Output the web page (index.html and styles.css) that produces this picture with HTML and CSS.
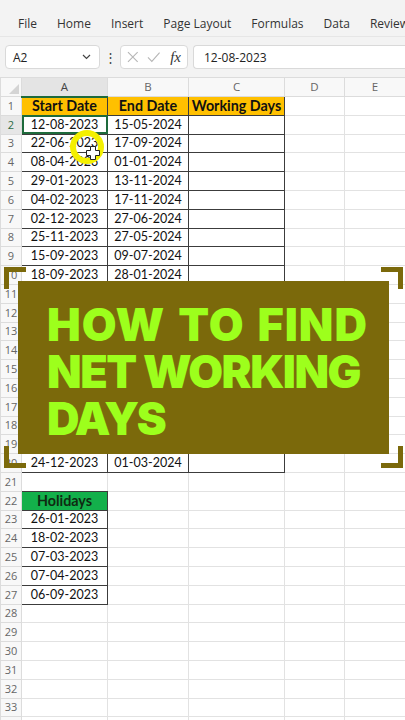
FILE: index.html
```html
<!DOCTYPE html>
<html>
<head>
<meta charset="utf-8">
<link rel="stylesheet" href="styles.css">
</head>
<body>
<div class="page">
  <div class="menubar">
    <span>File</span><span>Home</span><span>Insert</span><span>Page Layout</span><span>Formulas</span><span>Data</span><span>Review</span>
  </div>
  <div class="formulabar">
    <div class="namebox"><span>A2</span>
      <svg class="chev" width="9" height="6" viewBox="0 0 9 6"><path d="M1 1 L4.5 4.5 L8 1" fill="none" stroke="#444" stroke-width="1.2"/></svg>
    </div>
    <div class="dots">⋮</div>
    <div class="fnbox">
      <svg width="12" height="12" viewBox="0 0 12 12"><path d="M1 1 L11 11 M11 1 L1 11" stroke="#b5b5b5" stroke-width="1.1"/></svg>
      <svg width="14" height="12" viewBox="0 0 14 12"><path d="M1 6.5 L5 10.5 L13 1.5" fill="none" stroke="#b5b5b5" stroke-width="1.1"/></svg>
      <span class="fx">fx</span>
    </div>
    <div class="valuebox">12-08-2023</div>
  </div>
  <table class="sheet">
    <colgroup><col class="c0"><col class="ca"><col class="cb"><col class="cc"><col class="cd"><col class="ce"></colgroup>
    <tr class="hdr"><th class="corner"><span class="tri"></span></th><th class="sel">A</th><th>B</th><th>C</th><th>D</th><th>E</th></tr>
    <tr><th>1</th><td class="b y">Start Date</td><td class="b y">End Date</td><td class="b y">Working Days</td><td></td><td></td></tr>
    <tr><th class="rsel">2</th><td class="b cur">12-08-2023</td><td class="b">15-05-2024</td><td class="b"></td><td></td><td></td></tr>
    <tr><th>3</th><td class="b">22-06-2023</td><td class="b">17-09-2024</td><td class="b"></td><td></td><td></td></tr>
    <tr><th>4</th><td class="b">08-04-2023</td><td class="b">01-01-2024</td><td class="b"></td><td></td><td></td></tr>
    <tr><th>5</th><td class="b">29-01-2023</td><td class="b">13-11-2024</td><td class="b"></td><td></td><td></td></tr>
    <tr><th>6</th><td class="b">04-02-2023</td><td class="b">17-11-2024</td><td class="b"></td><td></td><td></td></tr>
    <tr><th>7</th><td class="b">02-12-2023</td><td class="b">27-06-2024</td><td class="b"></td><td></td><td></td></tr>
    <tr><th>8</th><td class="b">25-11-2023</td><td class="b">27-05-2024</td><td class="b"></td><td></td><td></td></tr>
    <tr><th>9</th><td class="b">15-09-2023</td><td class="b">09-07-2024</td><td class="b"></td><td></td><td></td></tr>
    <tr><th>10</th><td class="b">18-09-2023</td><td class="b">28-01-2024</td><td class="b"></td><td></td><td></td></tr>
    <tr><th>11</th><td class="b">05-03-2023</td><td class="b">14-02-2024</td><td class="b"></td><td></td><td></td></tr>
    <tr><th>12</th><td class="b">11-07-2023</td><td class="b">22-08-2024</td><td class="b"></td><td></td><td></td></tr>
    <tr><th>13</th><td class="b">19-10-2023</td><td class="b">03-04-2024</td><td class="b"></td><td></td><td></td></tr>
    <tr><th>14</th><td class="b">27-02-2023</td><td class="b">16-10-2024</td><td class="b"></td><td></td><td></td></tr>
    <tr><th>15</th><td class="b">09-05-2023</td><td class="b">21-12-2024</td><td class="b"></td><td></td><td></td></tr>
    <tr><th>16</th><td class="b">14-06-2023</td><td class="b">30-03-2024</td><td class="b"></td><td></td><td></td></tr>
    <tr><th>17</th><td class="b">03-08-2023</td><td class="b">12-06-2024</td><td class="b"></td><td></td><td></td></tr>
    <tr><th>18</th><td class="b">21-01-2023</td><td class="b">08-09-2024</td><td class="b"></td><td></td><td></td></tr>
    <tr><th>19</th><td class="b">30-10-2023</td><td class="b">25-07-2024</td><td class="b"></td><td></td><td></td></tr>
    <tr><th>20</th><td class="b">24-12-2023</td><td class="b">01-03-2024</td><td class="b"></td><td></td><td></td></tr>
    <tr><th>21</th><td class="bb"></td><td></td><td></td><td></td><td></td></tr>
    <tr><th>22</th><td class="b g">Holidays</td><td></td><td></td><td></td><td></td></tr>
    <tr><th>23</th><td class="b">26-01-2023</td><td></td><td></td><td></td><td></td></tr>
    <tr><th>24</th><td class="b">18-02-2023</td><td></td><td></td><td></td><td></td></tr>
    <tr><th>25</th><td class="b">07-03-2023</td><td></td><td></td><td></td><td></td></tr>
    <tr><th>26</th><td class="b">07-04-2023</td><td></td><td></td><td></td><td></td></tr>
    <tr><th>27</th><td class="b">06-09-2023</td><td></td><td></td><td></td><td></td></tr>
    <tr><th>28</th><td></td><td></td><td></td><td></td><td></td></tr>
    <tr><th>29</th><td></td><td></td><td></td><td></td><td></td></tr>
    <tr><th>30</th><td></td><td></td><td></td><td></td><td></td></tr>
    <tr><th>31</th><td></td><td></td><td></td><td></td><td></td></tr>
    <tr><th>32</th><td></td><td></td><td></td><td></td><td></td></tr>
    <tr><th>33</th><td></td><td></td><td></td><td></td><td></td></tr>
    <tr><th>34</th><td></td><td></td><td></td><td></td><td></td></tr>
  </table>

  <div class="ring">
    <svg class="plus" width="14" height="14" viewBox="0 0 14 14"><path d="M4.5 0.5 H9.5 V4.5 H13.5 V9.5 H9.5 V13.5 H4.5 V9.5 H0.5 V4.5 H4.5 Z" fill="#fff" stroke="#222" stroke-width="1"/></svg>
  </div>

  <div class="bracket tl"></div>
  <div class="bracket tr"></div>
  <div class="bracket bl"></div>
  <div class="bracket br"></div>
  <div class="banner">
    <div class="headline">
      <span class="l1">HOW TO FIND</span>
      <span class="l2">NET WORKING</span>
      <span class="l3">DAYS</span>
    </div>
  </div>
</div>
</body>
</html>
```

FILE: styles.css
```css
html, body {
  margin: 0;
  padding: 0;
  background: #fff;
}
.page {
  position: relative;
  width: 405px;
  height: 720px;
  overflow: hidden;
  font-family: "Open Sans", "Noto Sans", sans-serif;
}
.menubar {
  height: 37px;
  background: #f3f3f3;
  border-bottom: 1px solid #e6e6e6;
  display: flex;
  align-items: center;
  gap: 20px;
  padding: 11px 0 0 18px;
  box-sizing: border-box;
  font-size: 12px;
  color: #333;
  white-space: nowrap;
}
.formulabar {
  height: 40px;
  background: #f3f3f3;
  display: flex;
  align-items: center;
  padding: 0 0 0 5px;
  box-sizing: border-box;
}
.namebox, .fnbox, .valuebox {
  height: 24px;
  background: #fff;
  border: 1px solid #d9d9d9;
  border-radius: 4px;
  box-sizing: border-box;
  display: flex;
  align-items: center;
  font-size: 12px;
  color: #222;
}
.namebox {
  width: 95px;
  padding: 0 8px 0 7px;
  justify-content: space-between;
}
.dots {
  width: 20px;
  text-align: center;
  font-size: 13px;
  color: #444;
}
.fnbox {
  width: 68px;
  padding: 0 6px 0 6px;
  gap: 8px;
}
.fx {
  font-family: "Liberation Serif", serif;
  font-style: italic;
  font-size: 15px;
  color: #333;
  margin-left: 2px;
}
.valuebox {
  flex: 1;
  margin-left: 5px;
  padding-left: 10px;
  border-right: none;
  border-radius: 4px 0 0 4px;
}
.sheet {
  table-layout: fixed;
  width: 405px;
  border-collapse: collapse;
  font-family: "Lato", "Liberation Sans", sans-serif;
  font-size: 12.5px;
  color: #111;
}
.c0 { width: 21px; }
.ca { width: 86px; }
.cb { width: 81px; }
.cc { width: 96px; }
.cd { width: 60px; }
.ce { width: 61px; }
.sheet tr { height: 18.8px; }
.sheet tr.hdr { height: 19px; }
.sheet th, .sheet td {
  padding: 0;
  border: 1px solid #e2e2e2;
  text-align: center;
  white-space: nowrap;
  overflow: hidden;
  line-height: 16px;
}
.sheet th {
  font-family: "Open Sans", "Noto Sans", sans-serif;
  font-weight: normal;
  font-size: 11px;
  color: #666;
  background: #f8f8f8;
  border-color: #dcdcdc;
}
.sheet .hdr th {
  font-size: 11.5px;
  background: #f8f8f8;
}
.sheet .hdr th.sel {
  background: #e4e4e4;
  color: #444;
  border-bottom: 2px solid #1e6b3c;
}
.sheet th.rsel {
  background: #e6e6e6;
  color: #2d6b44;
}
.corner {
  position: relative;
}
.tri {
  position: absolute;
  right: 2px;
  bottom: 2px;
  width: 0;
  height: 0;
  border-left: 10px solid transparent;
  border-bottom: 10px solid #d4d4d4;
}
.sheet td.b {
  border: 1px solid #3c3c3c;
}
.sheet td.bb {
  border-bottom: 1px solid #3c3c3c;
}
.sheet td.y {
  background: #ffc000;
  font-weight: bold;
  font-size: 14.3px;
}
.sheet td.g {
  background: #13b04b;
  font-weight: bold;
  font-size: 14.3px;
  color: #0f2a12;
}
.sheet td.cur {
  outline: 2px solid #1e6b3c;
  outline-offset: -2px;
}
.ring {
  position: absolute;
  left: 70px;
  top: 130px;
  width: 34px;
  height: 34px;
  box-sizing: border-box;
  border: 6px solid #f4f000;
  border-radius: 50%;
}
.plus {
  position: absolute;
  left: 10px;
  top: 10px;
}
.banner {
  position: absolute;
  left: 18px;
  top: 281px;
  width: 371px;
  height: 173px;
  background: #7b690b;
  box-sizing: border-box;
  padding: 20px 0 0 29px;
}
.headline {
  font-family: "Inter", "Lato", sans-serif;
  font-weight: 900;
  font-size: 45px;
  line-height: 47px;
  color: #9dff1c;
  white-space: nowrap;
}
.headline span {
  display: block;
}
.l1 { letter-spacing: 1px; word-spacing: 3px; }
.l2 { letter-spacing: -1.5px; }
.l3 { letter-spacing: -2.5px; }
.bracket {
  position: absolute;
  width: 22px;
  height: 22px;
  box-sizing: border-box;
  border: 0 solid #7b690b;
}
.tl { left: 4px; top: 267px; border-top-width: 5px; border-left-width: 5px; }
.tr { left: 381px; top: 267px; border-top-width: 5px; border-right-width: 5px; }
.bl { left: 4px; top: 446px; border-bottom-width: 5px; border-left-width: 5px; }
.br { left: 381px; top: 446px; border-bottom-width: 5px; border-right-width: 5px; }
```
